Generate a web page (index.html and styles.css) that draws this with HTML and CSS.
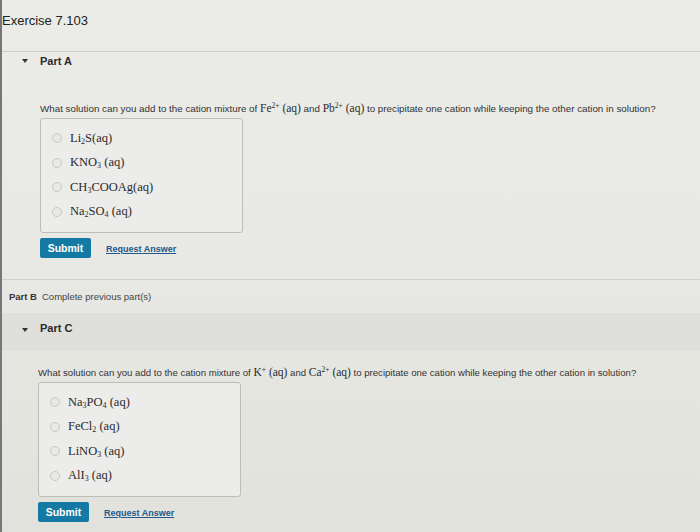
FILE: index.html
```html
<!DOCTYPE html>
<html>
<head>
<meta charset="utf-8">
<link rel="stylesheet" href="styles.css">
</head>
<body>
<div class="page">
  <div class="title">Exercise 7.103</div>

  <div class="part part-a">
    <div class="part-head"><span class="caret"></span><span class="part-label">Part A</span></div>
    <div class="part-body">
      <p class="question">What solution can you add to the cation mixture of <span class="m">Fe<sup>2+</sup> (aq)</span> and <span class="m">Pb<sup>2+</sup> (aq)</span> to precipitate one cation while keeping the other cation in solution?</p>
      <div class="options">
        <label class="opt"><span class="radio"></span><span class="m">Li<sub>2</sub>S(aq)</span></label>
        <label class="opt"><span class="radio"></span><span class="m">KNO<sub>3</sub> (aq)</span></label>
        <label class="opt"><span class="radio"></span><span class="m">CH<sub>3</sub>COOAg(aq)</span></label>
        <label class="opt"><span class="radio"></span><span class="m">Na<sub>2</sub>SO<sub>4</sub> (aq)</span></label>
      </div>
      <div class="actions"><span class="submit">Submit</span><span class="req">Request Answer</span></div>
    </div>
  </div>

  <div class="part-b"><span class="b-label">Part B</span><span class="b-note">Complete previous part(s)</span></div>

  <div class="part part-c">
    <div class="part-head band"><span class="caret"></span><span class="part-label">Part C</span></div>
    <div class="part-body body-c">
      <p class="question">What solution can you add to the cation mixture of <span class="m">K<sup>+</sup> (aq)</span> and <span class="m">Ca<sup>2+</sup> (aq)</span> to precipitate one cation while keeping the other cation in solution?</p>
      <div class="options">
        <label class="opt"><span class="radio"></span><span class="m">Na<sub>3</sub>PO<sub>4</sub> (aq)</span></label>
        <label class="opt"><span class="radio"></span><span class="m">FeCl<sub>2</sub> (aq)</span></label>
        <label class="opt"><span class="radio"></span><span class="m">LiNO<sub>3</sub> (aq)</span></label>
        <label class="opt"><span class="radio"></span><span class="m">AlI<sub>3</sub> (aq)</span></label>
      </div>
      <div class="actions"><span class="submit">Submit</span><span class="req">Request Answer</span></div>
    </div>
  </div>
</div>
</body>
</html>
```

FILE: styles.css
```css
html, body {
  margin: 0;
  padding: 0;
}
body {
  background: #e4e4df;
  font-family: "Liberation Sans", Arial, sans-serif;
  color: #2a2a2a;
  width: 700px;
  height: 532px;
  overflow: hidden;
}
.page {
  border-left: 2px solid #77777a;
  height: 532px;
  background: linear-gradient(180deg, #ebebe8 0%, #e8e8e4 50%, #e2e2dc 100%);
}
.title {
  height: 52px;
  box-sizing: border-box;
  padding: 13px 0 0 0;
  font-size: 13px;
  color: #222;
  border-bottom: 1px solid #cdcdc9;
}
.part-head {
  display: flex;
  align-items: center;
  height: 17px;
  padding-left: 20px;
}
.caret {
  width: 0;
  height: 0;
  border-left: 3.5px solid transparent;
  border-right: 3.5px solid transparent;
  border-top: 4px solid #333;
  margin-right: 12px;
  margin-top: 1px;
}
.part-label {
  font-size: 11px;
  font-weight: bold;
  color: #2b2b2b;
}
.part-body {
  padding-left: 38px;
  padding-top: 32px;
}
.question {
  margin: 0;
  font-size: 9.8px;
  color: #333;
  white-space: nowrap;
  line-height: 14px;
}
.m {
  font-family: "Liberation Serif", "Times New Roman", serif;
  font-size: 12.5px;
  color: #2a2a2a;
}
.question .m {
  font-size: 11.5px;
}
sup {
  font-size: 7.5px;
  vertical-align: 4px;
  line-height: 0;
}
sub {
  font-size: 8px;
  vertical-align: -2px;
  line-height: 0;
}
.options {
  margin-top: 2px;
  width: 203px;
  height: 115px;
  box-sizing: border-box;
  border: 1px solid #bcbcb8;
  border-radius: 3px;
  padding-top: 11px;
  display: flex;
  flex-direction: column;
  gap: 8.5px;
  background: #ececea;
}
.opt {
  display: flex;
  align-items: center;
  height: 16px;
  padding-left: 11px;
}
.radio {
  width: 10px;
  height: 10px;
  border-radius: 50%;
  border: 1px solid #c8c8c5;
  background: #e8e8e5;
  box-sizing: border-box;
  margin-right: 8px;
}
.actions {
  display: flex;
  align-items: center;
  margin-top: 5px;
}
.submit {
  display: inline-flex;
  align-items: center;
  justify-content: center;
  width: 51px;
  height: 20px;
  background: #1479a3;
  color: #fff;
  font-size: 10.5px;
  font-weight: bold;
  border-radius: 2px;
}
.req {
  margin-left: 15px;
  font-size: 9px;
  font-weight: bold;
  color: #24578a;
  text-decoration: underline;
  margin-top: 2px;
}
.part-a {
  border-bottom: 1px solid #d0d0cc;
  padding-bottom: 21px;
}
.part-b {
  display: flex;
  align-items: center;
  height: 33px;
  padding-left: 7px;
  font-size: 9.5px;
}
.b-label {
  font-weight: bold;
  color: #333;
  margin-right: 5px;
}
.b-note {
  color: #444;
}
.band {
  background: #dfdfdb;
  height: 38px;
}
.part-c .part-head {
  align-items: flex-start;
  box-sizing: border-box;
  padding-top: 9px;
}
.part-c .caret {
  margin-top: 6px;
}
.body-c {
  padding-top: 14px;
  padding-left: 36px;
}
.body-c .question {
  font-size: 9.6px;
}
```
